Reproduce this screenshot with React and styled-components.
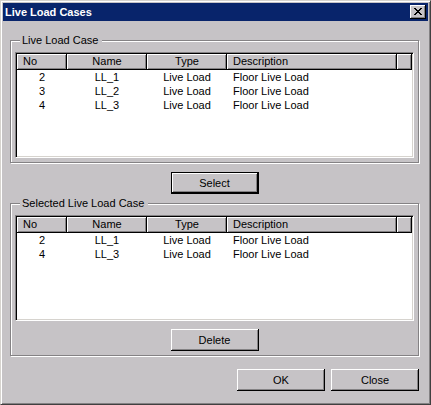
import styled, { createGlobalStyle } from 'styled-components';

const Global = createGlobalStyle`
  html, body {
    margin: 0;
    padding: 0;
    background: #c6c3c6;
  }
  * {
    box-sizing: border-box;
  }
`;

const Window = styled.div`
  width: 431px;
  height: 405px;
  background: #c6c3c6;
  border: 1px solid;
  border-color: #d6d3ce #404040 #404040 #d6d3ce;
  box-shadow: inset 1px 1px #fff, inset -1px -1px #848284;
  padding: 2px;
  display: flex;
  flex-flow: column nowrap;
  font-family: "Liberation Sans", Arial, sans-serif;
  font-size: 11px;
  color: #000;
`;

const TitleBar = styled.div`
  height: 18px;
  background: #08246b;
  display: flex;
  align-items: center;
  justify-content: space-between;
  padding: 0 2px 0 2px;
`;

const TitleText = styled.span`
  color: #fff;
  font-weight: bold;
  font-size: 11px;
  line-height: 18px;
`;

const CloseBox = styled.div`
  width: 16px;
  height: 14px;
  background: #c6c3c6;
  box-shadow: inset -1px -1px #000, inset 1px 1px #fff, inset -2px -2px #848284;
  display: flex;
  align-items: center;
  justify-content: center;
  padding-bottom: 1px;
`;

const Body = styled.div`
  flex: 1;
  display: flex;
  flex-flow: column nowrap;
  padding: 0 9px 0 7px;
`;

const Group = styled.fieldset`
  margin: ${(p) => p.$top}px 0 0 0;
  padding: 5px 4px ${(p) => p.$bottom}px 4px;
  border: 1px solid #848284;
  box-shadow: inset 1px 1px #fff, 1px 1px 0 #fff;
  display: flex;
  flex-flow: column nowrap;
  align-items: center;
  min-width: 0;
`;

const Legend = styled.legend`
  padding: 0 4px 0 2px;
  margin-left: 5px;
  line-height: 13px;
  background: #c6c3c6;
  font-size: 11px;
`;

const List = styled.div`
  width: 399px;
  height: 106px;
  background: #fff;
  border: 1px solid;
  border-color: #848284 #fff #fff #848284;
  box-shadow: inset 1px 1px #000, inset -1px -1px #d6d3ce;
  padding: 1px;
  overflow: hidden;
`;

const cols = '50px 80px 80px 170px 1fr';

const HeaderRow = styled.div`
  display: grid;
  grid-template-columns: ${cols};
  height: 16px;
`;

const HeaderCell = styled.div`
  background: #c6c3c6;
  box-shadow: inset -1px -1px #000, inset 1px 1px #fff, inset -2px -2px #848284;
  line-height: 15px;
  padding: 0 6px;
  text-align: ${(p) => p.$align || 'left'};
  white-space: nowrap;
`;

const Row = styled.div`
  display: grid;
  grid-template-columns: ${cols};
  height: 14px;
  line-height: 14px;
`;

const Cell = styled.div`
  text-align: ${(p) => p.$align || 'left'};
  padding: 0 6px;
  white-space: nowrap;
`;

const Button = styled.button`
  width: 88px;
  height: 22px;
  margin-top: ${(p) => p.$top || 0}px;
  align-self: ${(p) => p.$center ? 'center' : 'auto'};
  background: #c6c3c6;
  font-family: "Liberation Sans", Arial, sans-serif;
  font-size: 11px;
  color: #000;
  padding: 0;
  border: ${(p) => (p.$default ? '1px solid #000' : 'none')};
  box-shadow: inset -1px -1px #000, inset 1px 1px #fff, inset -2px -2px #848284;
  outline: none;
`;

const Footer = styled.div`
  display: flex;
  justify-content: flex-end;
  gap: 6px;
  margin-top: 13px;
`;

const headers = [
  { label: 'No', align: 'left' },
  { label: 'Name', align: 'center' },
  { label: 'Type', align: 'center' },
  { label: 'Description', align: 'left' },
  { label: '', align: 'left' },
];

const allCases = [
  { no: 2, name: 'LL_1', type: 'Live Load', desc: 'Floor Live Load' },
  { no: 3, name: 'LL_2', type: 'Live Load', desc: 'Floor Live Load' },
  { no: 4, name: 'LL_3', type: 'Live Load', desc: 'Floor Live Load' },
];

const selectedCases = [
  { no: 2, name: 'LL_1', type: 'Live Load', desc: 'Floor Live Load' },
  { no: 4, name: 'LL_3', type: 'Live Load', desc: 'Floor Live Load' },
];

const CaseList = ({ items }) => (
  <List>
    <HeaderRow>
      {headers.map((h, i) => (
        <HeaderCell key={i} $align={h.align}>{h.label}</HeaderCell>
      ))}
    </HeaderRow>
    {items.map((c) => (
      <Row key={c.no}>
        <Cell $align="center">{c.no}</Cell>
        <Cell $align="center">{c.name}</Cell>
        <Cell $align="center">{c.type}</Cell>
        <Cell>{c.desc}</Cell>
        <Cell />
      </Row>
    ))}
  </List>
);

const App = () => {
  return (
    <>
      <Global />
      <Window>
        <TitleBar>
          <TitleText>Live Load Cases</TitleText>
          <CloseBox>
            <svg width="8" height="7" viewBox="0 0 8 7">
              <path d="M0 0h2v1h-2zM6 0h2v1h-2zM1 1h2v1h-2zM5 1h2v1h-2zM2 2h4v1h-4zM3 3h2v1h-2zM2 4h4v1h-4zM1 5h2v1h-2zM5 5h2v1h-2zM0 6h2v1h-2zM6 6h2v1h-2z" fill="#000" />
            </svg>
          </CloseBox>
        </TitleBar>
        <Body>
          <Group $top={13} $bottom={4}>
            <Legend>Live Load Case</Legend>
            <CaseList items={allCases} />
          </Group>
          <Button $default $center $top={9}>Select</Button>
          <Group $top={3} $bottom={4}>
            <Legend>Selected Live Load Case</Legend>
            <CaseList items={selectedCases} />
            <Button $top={8}>Delete</Button>
          </Group>
          <Footer>
            <Button>OK</Button>
            <Button>Close</Button>
          </Footer>
        </Body>
      </Window>
    </>
  );
};

export default App;
